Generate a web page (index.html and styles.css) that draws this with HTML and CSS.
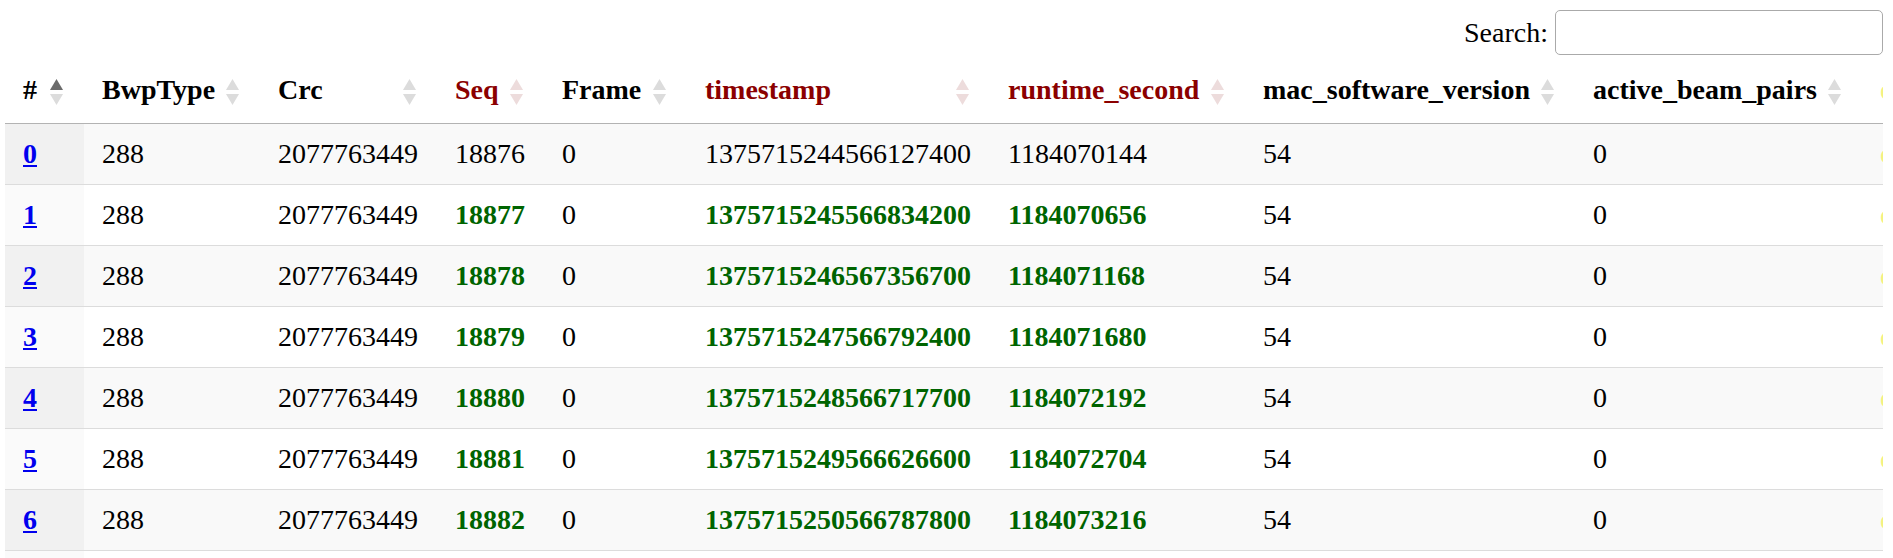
FILE: index.html
```html
<!DOCTYPE html>
<html>
<head>
<meta charset="utf-8">
<link rel="stylesheet" href="styles.css">
</head>
<body>
<div class="page">
  <div class="search-row">
    <label class="search-label" for="q">Search:</label>
    <input id="q" class="search-input" type="search">
  </div>
  <div class="scroller">
    <table class="grid">
      <colgroup>
        <col class="w0"><col class="w1"><col class="w2"><col class="w3"><col class="w4"><col class="w5"><col class="w6"><col class="w7"><col class="w8"><col class="w9">
      </colgroup>
      <thead>
        <tr>
          <th><div class="hc"><span>#</span><svg class="sort" viewBox="0 0 13 26"><path class="up active" d="M6.5 0 L13 11 L0 11 Z"/><path class="dn" d="M0 15 L13 15 L6.5 26 Z"/></svg></div></th>
          <th><div class="hc"><span>BwpType</span><svg class="sort" viewBox="0 0 13 26"><path class="up" d="M6.5 0 L13 11 L0 11 Z"/><path class="dn" d="M0 15 L13 15 L6.5 26 Z"/></svg></div></th>
          <th><div class="hc"><span>Crc</span><svg class="sort" viewBox="0 0 13 26"><path class="up" d="M6.5 0 L13 11 L0 11 Z"/><path class="dn" d="M0 15 L13 15 L6.5 26 Z"/></svg></div></th>
          <th class="red"><div class="hc"><span>Seq</span><svg class="sort" viewBox="0 0 13 26"><path class="up" d="M6.5 0 L13 11 L0 11 Z"/><path class="dn" d="M0 15 L13 15 L6.5 26 Z"/></svg></div></th>
          <th><div class="hc"><span>Frame</span><svg class="sort" viewBox="0 0 13 26"><path class="up" d="M6.5 0 L13 11 L0 11 Z"/><path class="dn" d="M0 15 L13 15 L6.5 26 Z"/></svg></div></th>
          <th class="red"><div class="hc"><span>timestamp</span><svg class="sort" viewBox="0 0 13 26"><path class="up" d="M6.5 0 L13 11 L0 11 Z"/><path class="dn" d="M0 15 L13 15 L6.5 26 Z"/></svg></div></th>
          <th class="red"><div class="hc"><span>runtime_second</span><svg class="sort" viewBox="0 0 13 26"><path class="up" d="M6.5 0 L13 11 L0 11 Z"/><path class="dn" d="M0 15 L13 15 L6.5 26 Z"/></svg></div></th>
          <th><div class="hc"><span>mac_software_version</span><svg class="sort" viewBox="0 0 13 26"><path class="up" d="M6.5 0 L13 11 L0 11 Z"/><path class="dn" d="M0 15 L13 15 L6.5 26 Z"/></svg></div></th>
          <th><div class="hc"><span>active_beam_pairs</span><svg class="sort" viewBox="0 0 13 26"><path class="up" d="M6.5 0 L13 11 L0 11 Z"/><path class="dn" d="M0 15 L13 15 L6.5 26 Z"/></svg></div></th>
          <th class="yel"><div class="hc"><span>o</span></div></th>
        </tr>
      </thead>
      <tbody>
        <tr class="odd"><td class="idx"><a href="#">0</a></td><td>288</td><td>2077763449</td><td>18876</td><td>0</td><td>1375715244566127400</td><td>1184070144</td><td>54</td><td>0</td><td class="yel">o</td></tr>
        <tr class="even"><td class="idx"><a href="#">1</a></td><td>288</td><td>2077763449</td><td class="g">18877</td><td>0</td><td class="g">1375715245566834200</td><td class="g">1184070656</td><td>54</td><td>0</td><td class="yel">o</td></tr>
        <tr class="odd"><td class="idx"><a href="#">2</a></td><td>288</td><td>2077763449</td><td class="g">18878</td><td>0</td><td class="g">1375715246567356700</td><td class="g">1184071168</td><td>54</td><td>0</td><td class="yel">o</td></tr>
        <tr class="even"><td class="idx"><a href="#">3</a></td><td>288</td><td>2077763449</td><td class="g">18879</td><td>0</td><td class="g">1375715247566792400</td><td class="g">1184071680</td><td>54</td><td>0</td><td class="yel">o</td></tr>
        <tr class="odd"><td class="idx"><a href="#">4</a></td><td>288</td><td>2077763449</td><td class="g">18880</td><td>0</td><td class="g">1375715248566717700</td><td class="g">1184072192</td><td>54</td><td>0</td><td class="yel">o</td></tr>
        <tr class="even"><td class="idx"><a href="#">5</a></td><td>288</td><td>2077763449</td><td class="g">18881</td><td>0</td><td class="g">1375715249566626600</td><td class="g">1184072704</td><td>54</td><td>0</td><td class="yel">o</td></tr>
        <tr class="odd"><td class="idx"><a href="#">6</a></td><td>288</td><td>2077763449</td><td class="g">18882</td><td>0</td><td class="g">1375715250566787800</td><td class="g">1184073216</td><td>54</td><td>0</td><td class="yel">o</td></tr>
        <tr class="even"><td class="idx"><a href="#">7</a></td><td>288</td><td>2077763449</td><td class="g">18883</td><td>0</td><td class="g">1375715251566745300</td><td class="g">1184073728</td><td>54</td><td>0</td><td class="yel">o</td></tr>
      </tbody>
    </table>
  </div>
</div>
</body>
</html>
```
FILE: styles.css
```css
html, body {
  margin: 0;
  padding: 0;
  overflow: hidden;
  background: #fff;
}
body {
  font-family: "Liberation Serif", "Times New Roman", serif;
  font-size: 28px;
  color: #000;
}
.page {
  padding: 10px 10px 0 5px;
}
.search-row {
  display: flex;
  justify-content: flex-end;
  align-items: center;
  gap: 7px;
  height: 45px;
}
.search-label {
  line-height: 32px;
}
.search-input {
  box-sizing: border-box;
  width: 328px;
  height: 45px;
  border: 1px solid #aaa;
  border-radius: 5px;
  background: #fff;
  padding: 4px 8px;
  font: inherit;
  margin: 0;
}
.scroller {
  overflow: hidden;
  width: 100%;
  margin-top: 2px;
}
.grid {
  border-collapse: separate;
  border-spacing: 0;
  table-layout: fixed;
  width: 2079px;
  white-space: nowrap;
}
.w0 { width: 79px; }
.w1 { width: 176px; }
.w2 { width: 177px; }
.w3 { width: 107px; }
.w4 { width: 143px; }
.w5 { width: 303px; }
.w6 { width: 255px; }
.w7 { width: 330px; }
.w8 { width: 287px; }
.w9 { width: 222px; }
.grid th {
  font-weight: bold;
  text-align: left;
  height: 67px;
  padding: 0 0 0 18px;
  line-height: 32px;
  border-bottom: 1px solid #b3b3b3;
  box-sizing: border-box;
  overflow: hidden;
}
.hc {
  display: flex;
  align-items: center;
  justify-content: space-between;
  padding-right: 21px;
}
.sort {
  width: 13px;
  height: 26px;
  flex: none;
  margin-top: 3px;
}
.sort path { fill: #dcdcdc; }
.sort path.active { fill: #6b6b6b; }
.red { color: #8b0000; }
.red .sort path { fill: #eddcdc; }
.grid td {
  height: 60px;
  padding: 0 0 0 18px;
  line-height: 32px;
  border-bottom: 1px solid #dcdcdc;
  overflow: hidden;
}
.grid tr.odd td { background: #f9f9f9; }
.grid tr.even td { background: #fff; }
.grid tr.odd td.idx { background: #f1f1f1; }
.grid tr.even td.idx { background: #fafafa; }
.idx a {
  color: #0000ee;
  font-weight: bold;
  text-decoration: underline;
}
.g {
  color: #006400;
  font-weight: bold;
}
.yel { color: #f2f280; }
```
